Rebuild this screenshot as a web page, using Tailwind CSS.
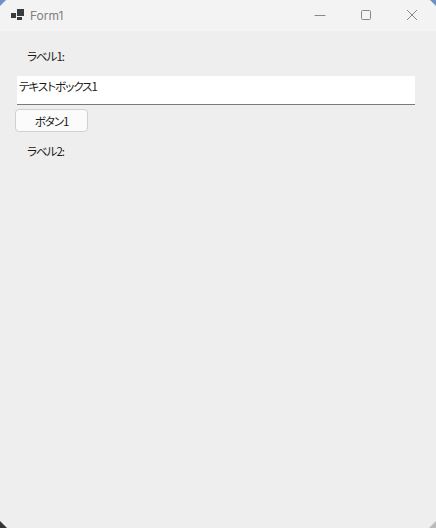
<!DOCTYPE html>
<html lang="ja">
<head>
    <meta charset="UTF-8">
    <title>Form1</title>
    <script src="https://cdn.jsdelivr.net/npm/@tailwindcss/browser@4"></script>
</head>
<body class="m-0">
    <div class="relative w-[436px] h-[528px] overflow-hidden flex flex-col bg-[#eeeeee] text-[11.5px] tracking-[-1px] text-[#1a1a1a] [font-feature-settings:'palt'] font-['Noto_Sans_CJK_JP','Liberation_Sans',sans-serif]">
        <!-- title bar -->
        <div class="h-[31px] flex items-center bg-[#f3f3f3] shrink-0">
            <svg class="ml-[11px] mb-[2px] w-[13px] h-[12px]" viewBox="0 0 13 12" fill="#3c3c3c">
                <rect x="0" y="4" width="5" height="5"/>
                <rect x="6" y="0" width="7" height="7"/>
                <rect x="6" y="8" width="5" height="3"/>
            </svg>
            <span class="ml-[6px] text-[#808080] text-[12px] tracking-normal font-['Inter','Liberation_Sans',sans-serif]">Form1</span>
            <div class="ml-auto mb-[1px] flex items-center">
                <svg class="w-[12px] h-[12px] mr-[34px]" viewBox="0 0 12 12" stroke="#888" fill="none"><path d="M0.5 6.5h11"/></svg>
                <svg class="w-[12px] h-[12px] mr-[34px]" viewBox="0 0 12 12" stroke="#888" fill="none"><rect x="1.5" y="1.5" width="9" height="9" rx="1"/></svg>
                <svg class="w-[12px] h-[12px] mr-[18px]" viewBox="0 0 12 12" stroke="#888" fill="none"><path d="M1 1l10 10M11 1L1 11"/></svg>
            </div>
        </div>
        <!-- form -->
        <div class="flex flex-col items-start pl-[15px]">
            <label class="ml-[12px] mt-[16px] h-[18px] leading-[18px]">ラベル1:</label>
            <div class="ml-[2px] mt-[11px] w-[398px] h-[29px] bg-white border-b border-[#7a7a7a] pl-[2px] pt-[1px] leading-[18px]">テキストボックス1</div>
            <button class="mt-[4px] w-[73px] h-[23px] bg-[#fbfbfb] border border-[#d0d0d0] rounded-[4px] leading-[20px]">ボタン1</button>
            <label class="ml-[12px] mt-[10px] h-[18px] leading-[18px]">ラベル2:</label>
        </div>
        <!-- desktop showing through the window corners -->
        <div class="absolute top-0 left-0 w-[6px] h-[6px] bg-[#6f8fc9] [clip-path:polygon(0_0,100%_0,0_100%)]"></div>
        <div class="absolute top-0 right-0 w-[6px] h-[6px] bg-[#6f8fc9] [clip-path:polygon(0_0,100%_0,100%_100%)]"></div>
        <div class="absolute bottom-0 left-0 w-[7px] h-[7px] bg-[#333333] [clip-path:polygon(0_0,100%_100%,0_100%)]"></div>
        <div class="absolute bottom-0 right-0 w-[7px] h-[7px] bg-[#bbbbbb] [clip-path:polygon(100%_0,100%_100%,0_100%)]"></div>
    </div>
</body>
</html>
